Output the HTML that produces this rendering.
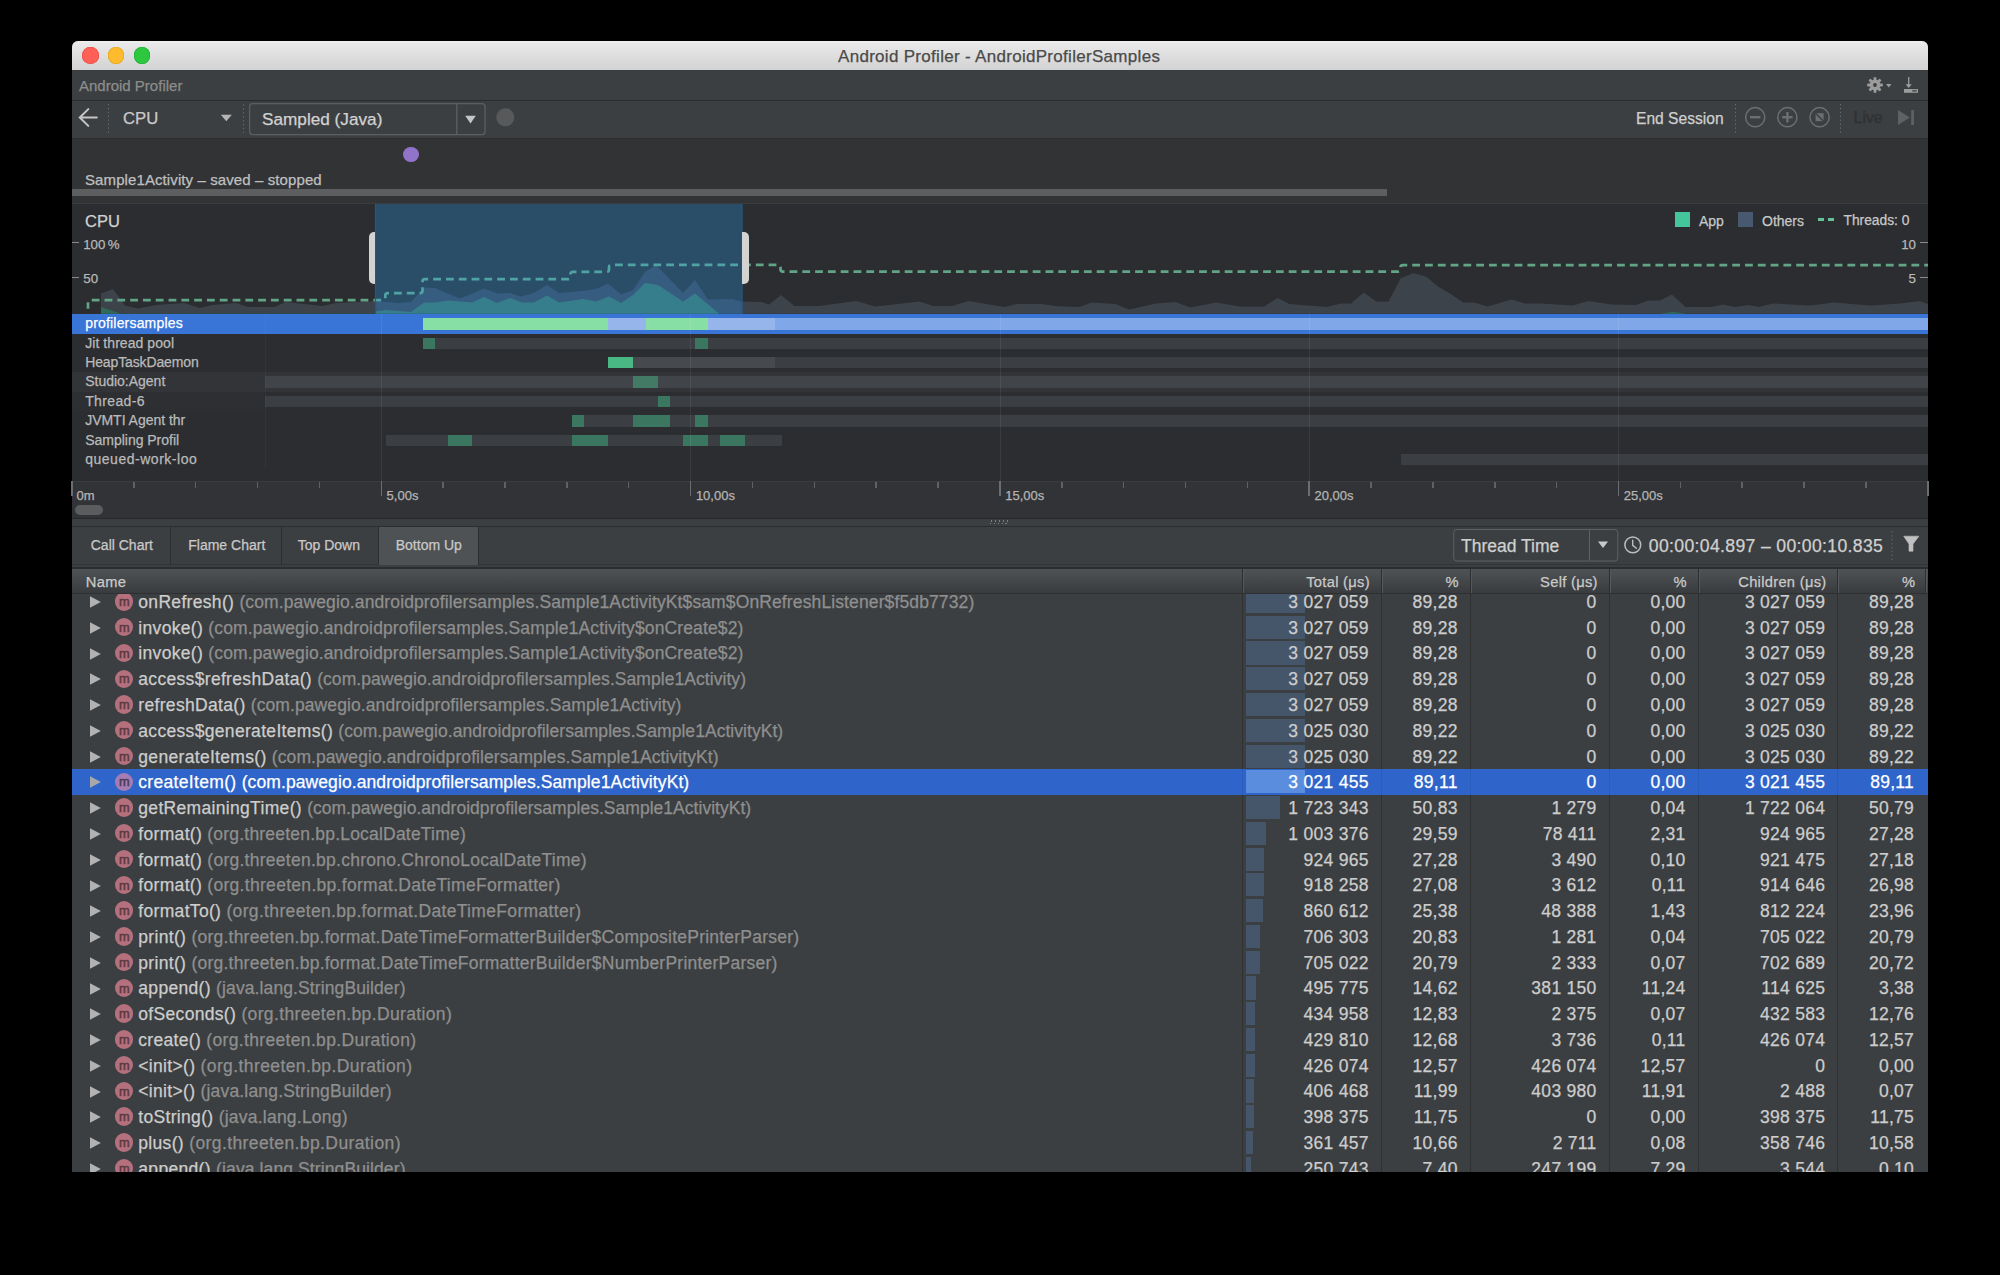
<!DOCTYPE html><html><head><meta charset="utf-8"><style>
*{margin:0;padding:0;box-sizing:border-box}
html,body{width:2000px;height:1275px;overflow:hidden;background:#000}
body{position:relative;font-family:"Liberation Sans",sans-serif}
.a{position:absolute}
.t{position:absolute;white-space:nowrap;line-height:1;-webkit-text-stroke:0.25px currentColor}
</style></head><body><div class="a" style="left:72px;top:41px;width:1856px;height:1131px;border-radius:6px 6px 0 0;overflow:hidden;background:#3c3f41">
<div class="a" style="left:0;top:0;width:100%;height:28.6px;background:linear-gradient(#f0f0f0 0px,#e8e8e8 3px,#d3d3d3 28.6px)"></div>
</div>
<div class="a" style="left:82.3px;top:47.400000000000006px;width:16.4px;height:16.4px;border-radius:50%;background:#fe5f57;box-shadow:inset 0 0 0 0.6px #e2463f"></div>
<div class="a" style="left:107.89999999999999px;top:47.400000000000006px;width:16.4px;height:16.4px;border-radius:50%;background:#febb2e;box-shadow:inset 0 0 0 0.6px #e1a116"></div>
<div class="a" style="left:133.70000000000002px;top:47.400000000000006px;width:16.4px;height:16.4px;border-radius:50%;background:#2dc840;box-shadow:inset 0 0 0 0.6px #1aab29"></div>
<div class="t" style="left:838px;top:48px;font-size:17px;color:#4a4a4a;letter-spacing:0.3px">Android Profiler - AndroidProfilerSamples</div>
<div class="a" style="left:72px;top:69.6px;width:1856px;height:30px;background:#3c3f41"></div>
<div class="t" style="left:79px;top:78px;font-size:15px;color:#8d8d8d;">Android Profiler</div>
<div class="a" style="left:72px;top:99.5px;width:1856px;height:1.5px;background:#292b2d"></div>
<div class="a" style="left:72px;top:101px;width:1856px;height:37px;background:#3c3f41"></div>
<div class="a" style="left:72px;top:137.8px;width:1856px;height:1px;background:#2a2c2e"></div>
<svg class="a" style="left:72px;top:101px" width="1856" height="37" viewBox="72 101 1856 37"><path d="M96.8,117.5 H80.2 M88.3,109.1 L79.8,117.5 L88.3,125.9" fill="none" stroke="#c6c6c6" stroke-width="2" stroke-linecap="round"/><line x1="108.5" y1="104" x2="108.5" y2="134" stroke="#6b6d6f" stroke-width="1" stroke-dasharray="1.3 2.6"/><line x1="243.6" y1="104.4" x2="243.6" y2="134" stroke="#6b6d6f" stroke-width="1" stroke-dasharray="1.3 2.6"/><line x1="1735.5" y1="104" x2="1735.5" y2="134" stroke="#6b6d6f" stroke-width="1" stroke-dasharray="1.3 2.6"/><line x1="1840.5" y1="104" x2="1840.5" y2="134" stroke="#6b6d6f" stroke-width="1" stroke-dasharray="1.3 2.6"/><path d="M220.8,114.8 H231.8 L226.3,121.2 Z" fill="#b4b4b4"/><rect x="249.6" y="103.6" width="235.4" height="31" rx="3" fill="#3c3f41" stroke="#5c5e60" stroke-width="1.3"/><line x1="456.8" y1="104" x2="456.8" y2="134" stroke="#5c5e60" stroke-width="1.3"/><path d="M465.2,115.8 H475.8 L470.5,123.4 Z" fill="#c6c6c6"/><circle cx="505.3" cy="117.3" r="9" fill="#58595b"/><circle cx="1755.2" cy="117.2" r="9.6" fill="none" stroke="#6c6e70" stroke-width="1.5"/><line x1="1750" y1="117.2" x2="1760.4" y2="117.2" stroke="#6c6e70" stroke-width="2.4"/><circle cx="1787.4" cy="117.2" r="9.6" fill="none" stroke="#6c6e70" stroke-width="1.5"/><line x1="1782.2" y1="117.2" x2="1792.6" y2="117.2" stroke="#6c6e70" stroke-width="2.4"/><line x1="1787.4" y1="112" x2="1787.4" y2="122.4" stroke="#6c6e70" stroke-width="2.4"/><circle cx="1819.6" cy="117.2" r="9.6" fill="none" stroke="#6c6e70" stroke-width="1.5"/><path d="M1815.6,113.2 H1823.6 V121.2 H1815.6 Z" fill="#6c6e70"/><path d="M1815.6,113.2 L1823.6,121.2" stroke="#3c3f41" stroke-width="1.4"/><path d="M1898,110 L1909.8,117.5 L1898,125 Z" fill="#5f6163"/><rect x="1911.2" y="110" width="2.7" height="15" fill="#5f6163"/></svg>
<div class="t" style="left:123px;top:111.1px;font-size:16.7px;color:#cacaca;">CPU</div>
<div class="t" style="left:262px;top:110.8px;font-size:17.2px;color:#d2d2d2;">Sampled (Java)</div>
<div class="t" style="left:1636px;top:111.4px;font-size:15.6px;color:#cfcfcf;">End Session</div>
<div class="t" style="left:1853.6px;top:109.9px;font-size:15.8px;color:#2e3032;">Live</div>
<svg class="a" style="left:1860px;top:74px" width="68" height="24" viewBox="1860 74 68 24"><g fill="#9c9c9c"><circle cx="1875" cy="85" r="5.4"/><rect x="1873.6" y="77.2" width="2.8" height="3.6" rx="0.6" transform="rotate(0 1875 85)"/><rect x="1873.6" y="77.2" width="2.8" height="3.6" rx="0.6" transform="rotate(45 1875 85)"/><rect x="1873.6" y="77.2" width="2.8" height="3.6" rx="0.6" transform="rotate(90 1875 85)"/><rect x="1873.6" y="77.2" width="2.8" height="3.6" rx="0.6" transform="rotate(135 1875 85)"/><rect x="1873.6" y="77.2" width="2.8" height="3.6" rx="0.6" transform="rotate(180 1875 85)"/><rect x="1873.6" y="77.2" width="2.8" height="3.6" rx="0.6" transform="rotate(225 1875 85)"/><rect x="1873.6" y="77.2" width="2.8" height="3.6" rx="0.6" transform="rotate(270 1875 85)"/><rect x="1873.6" y="77.2" width="2.8" height="3.6" rx="0.6" transform="rotate(315 1875 85)"/></g><circle cx="1875" cy="85" r="1.9" fill="#3c3f41"/><path d="M1886,84 H1891.5 L1888.75,87.6 Z" fill="#9c9c9c"/><line x1="1908.7" y1="77" x2="1908.7" y2="86" stroke="#9c9c9c" stroke-width="1.3"/><path d="M1905.6,84.2 L1908.7,88 L1911.8,84.2 Z" fill="#9c9c9c"/><rect x="1904" y="89" width="14" height="3.8" fill="#9c9c9c"/><rect x="1912.2" y="89.8" width="4.6" height="2" fill="#5a5c5e"/></svg>
<div class="a" style="left:72px;top:138.8px;width:1856px;height:64.2px;background:#313335"></div>
<div class="a" style="left:72px;top:188.5px;width:1315px;height:7.4px;background:#5c5e60"></div>
<div class="a" style="left:72px;top:202.5px;width:1856px;height:1.5px;background:#3a3c3e"></div>
<div class="a" style="left:403px;top:146.7px;width:15.6px;height:15.6px;border-radius:50%;background:#9174c9"></div>
<div class="t" style="left:85px;top:172px;font-size:15px;color:#c0c0c0;letter-spacing:0.1px">Sample1Activity – saved – stopped</div>
<div class="a" style="left:72px;top:204px;width:1856px;height:314px;background:#2b2d30"></div>
<svg class="a" style="left:72px;top:204px" width="1856" height="110" viewBox="72 204 1856 110"><defs><clipPath id="sel"><rect x="375" y="203" width="367.5" height="111"/></clipPath></defs><path d="M101,313.8 L101,293.6 L113,289 L125,305.6 L138,308.6 L156,305 L184,303 L200,308 L212,305 L236,303 L248,307 L274,307 L286,302 L322,306 L336,303 L360,302 L375,301 L398,303 L411,302 L424,287.6 L435,288 L460,298.4 L484,288.4 L498,293.6 L510,293 L521,296.4 L534,293 L547,285 L559,293 L582,291 L596,289 L608,283.6 L621,294.4 L633,290 L645,272 L656,265 L683,293 L695,280 L708,299.6 L732,299 L742,301.6 L762,302 L769,304.6 L781,295 L794.5,306 L818.5,306 L856,301 L875.5,306.4 L919,301.6 L934,306 L952,306 L968.5,301 L1004.5,307 L1016.5,304 L1042,304 L1055.5,306 L1079.5,307 L1091.5,302.5 L1115.5,304 L1129,309.4 L1156,303.4 L1175.5,302 L1190.5,307.6 L1216,302.5 L1240,306.4 L1264,306.4 L1277.5,298 L1289.5,304 L1327,307 L1340.5,303.4 L1351,303.4 L1363.6,292.6 L1376.5,301.6 L1388.5,301.6 L1400.5,278.5 L1413.4,273 L1426,276.4 L1438,286.6 L1450,293.5 L1463.5,302.5 L1474,302.5 L1487.5,306.4 L1511.5,299.5 L1525,303.4 L1540,303.4 L1573,305.5 L1588,301 L1612,304.6 L1636,305 L1648,300.4 L1660,300.4 L1672,294.4 L1685.5,307 L1711,307 L1723,304.6 L1735,307 L1748.5,305 L1759,307 L1772.5,303.4 L1810,305.5 L1834,302.5 L1870,305.5 L1900,303.4 L1919.5,301 L1928,304 L1928,313.8 Z" fill="#3c434b"/><path d="M101,313.8 L101,307 L120,313.5 L375,313.5 L375,311.6 L386,310 L411,312 L424,302.4 L435,302.4 L448,300.6 L472,302.4 L484,297 L497,303 L510,298 L522,302.4 L534,302.4 L547,295.6 L559,302.4 L583,299 L596,301.6 L609,296.4 L621,303 L633,295 L645,283 L658,285 L683,301.6 L695,293.6 L719,313.5 L719,313.8 Z M1660,313.8 L1673,311.8 L1686,313.8 Z" fill="#2f6b58"/><path d="M88.00,308.80 L88.00,302.50 Q88.00,300.10 90.40,300.10 L382.90,300.10 Q385.30,300.10 385.30,297.70 L385.30,295.50 Q385.30,293.10 387.70,293.10 L420.10,293.10 Q422.50,293.10 422.50,290.70 L422.50,281.50 Q422.50,279.10 424.90,279.10 L568.10,279.10 Q570.50,279.10 570.50,276.70 L570.50,274.20 Q570.50,271.80 572.90,271.80 L606.60,271.80 Q609.00,271.80 609.00,269.40 L609.00,267.30 Q609.00,264.90 611.40,264.90 L778.10,264.90 Q780.50,264.90 780.50,267.30 L780.50,269.20 Q780.50,271.60 782.90,271.60 L1398.10,271.60 Q1400.50,271.60 1400.50,269.20 L1400.50,267.50 Q1400.50,265.10 1402.90,265.10 L1930.00,265.10" fill="none" stroke="#62a486" stroke-width="2.7" stroke-dasharray="7.8 5.0" stroke-dashoffset="1.35" stroke-linecap="butt" stroke-linejoin="round"/><g clip-path="url(#sel)"><rect x="375" y="203" width="367.5" height="111" fill="#2a4d68"/><path d="M101,313.8 L101,293.6 L113,289 L125,305.6 L138,308.6 L156,305 L184,303 L200,308 L212,305 L236,303 L248,307 L274,307 L286,302 L322,306 L336,303 L360,302 L375,301 L398,303 L411,302 L424,287.6 L435,288 L460,298.4 L484,288.4 L498,293.6 L510,293 L521,296.4 L534,293 L547,285 L559,293 L582,291 L596,289 L608,283.6 L621,294.4 L633,290 L645,272 L656,265 L683,293 L695,280 L708,299.6 L732,299 L742,301.6 L762,302 L769,304.6 L781,295 L794.5,306 L818.5,306 L856,301 L875.5,306.4 L919,301.6 L934,306 L952,306 L968.5,301 L1004.5,307 L1016.5,304 L1042,304 L1055.5,306 L1079.5,307 L1091.5,302.5 L1115.5,304 L1129,309.4 L1156,303.4 L1175.5,302 L1190.5,307.6 L1216,302.5 L1240,306.4 L1264,306.4 L1277.5,298 L1289.5,304 L1327,307 L1340.5,303.4 L1351,303.4 L1363.6,292.6 L1376.5,301.6 L1388.5,301.6 L1400.5,278.5 L1413.4,273 L1426,276.4 L1438,286.6 L1450,293.5 L1463.5,302.5 L1474,302.5 L1487.5,306.4 L1511.5,299.5 L1525,303.4 L1540,303.4 L1573,305.5 L1588,301 L1612,304.6 L1636,305 L1648,300.4 L1660,300.4 L1672,294.4 L1685.5,307 L1711,307 L1723,304.6 L1735,307 L1748.5,305 L1759,307 L1772.5,303.4 L1810,305.5 L1834,302.5 L1870,305.5 L1900,303.4 L1919.5,301 L1928,304 L1928,313.8 Z" fill="#365d80"/><path d="M101,313.8 L101,307 L120,313.5 L375,313.5 L375,311.6 L386,310 L411,312 L424,302.4 L435,302.4 L448,300.6 L472,302.4 L484,297 L497,303 L510,298 L522,302.4 L534,302.4 L547,295.6 L559,302.4 L583,299 L596,301.6 L609,296.4 L621,303 L633,295 L645,283 L658,285 L683,301.6 L695,293.6 L719,313.5 L719,313.8 Z M1660,313.8 L1673,311.8 L1686,313.8 Z" fill="#367e8b"/><path d="M88.00,308.80 L88.00,302.50 Q88.00,300.10 90.40,300.10 L382.90,300.10 Q385.30,300.10 385.30,297.70 L385.30,295.50 Q385.30,293.10 387.70,293.10 L420.10,293.10 Q422.50,293.10 422.50,290.70 L422.50,281.50 Q422.50,279.10 424.90,279.10 L568.10,279.10 Q570.50,279.10 570.50,276.70 L570.50,274.20 Q570.50,271.80 572.90,271.80 L606.60,271.80 Q609.00,271.80 609.00,269.40 L609.00,267.30 Q609.00,264.90 611.40,264.90 L778.10,264.90 Q780.50,264.90 780.50,267.30 L780.50,269.20 Q780.50,271.60 782.90,271.60 L1398.10,271.60 Q1400.50,271.60 1400.50,269.20 L1400.50,267.50 Q1400.50,265.10 1402.90,265.10 L1930.00,265.10" fill="none" stroke="#4fa3a3" stroke-width="2.7" stroke-dasharray="7.8 5.0" stroke-dashoffset="1.35" stroke-linecap="butt" stroke-linejoin="round"/></g><rect x="375.5" y="203.5" width="366.5" height="111" fill="none" stroke="#275782" stroke-width="1.2"/></svg>
<div class="a" style="left:368.7px;top:232px;width:6.8px;height:52.2px;background:#d3d3d3;border-radius:5px 0 0 5px"></div>
<div class="a" style="left:742.4px;top:232px;width:6.8px;height:52.2px;background:#d3d3d3;border-radius:0 5px 5px 0"></div>
<div class="t" style="left:85px;top:212.5px;font-size:16.5px;color:#d2d2d2;">CPU</div>
<div class="a" style="left:72px;top:242px;width:7px;height:1px;background:#8a8a8a"></div>
<div class="a" style="left:72px;top:276.5px;width:7px;height:1px;background:#8a8a8a"></div>
<div class="t" style="left:83.3px;top:237.6px;font-size:13.3px;color:#b8b8b8;letter-spacing:-0.1px">100&#8201;%</div>
<div class="t" style="left:83.3px;top:272.1px;font-size:13.3px;color:#b8b8b8;">50</div>
<div class="a" style="left:1920px;top:242px;width:8px;height:1px;background:#8a8a8a"></div>
<div class="a" style="left:1920px;top:276.5px;width:8px;height:1px;background:#8a8a8a"></div>
<div class="t" style="right:84px;top:237.6px;font-size:13.3px;color:#b8b8b8;text-align:right;">10</div>
<div class="t" style="right:84px;top:272.1px;font-size:13.3px;color:#b8b8b8;text-align:right;">5</div>
<div class="a" style="left:1675px;top:212px;width:15px;height:15px;background:#45c69a"></div>
<div class="t" style="left:1699px;top:213.7px;font-size:14px;color:#c8c8c8;">App</div>
<div class="a" style="left:1738px;top:212px;width:15px;height:15px;background:#47586f"></div>
<div class="t" style="left:1762px;top:213.7px;font-size:14px;color:#c8c8c8;">Others</div>
<div class="a" style="left:1818px;top:217.5px;width:6px;height:3px;background:#62c496"></div>
<div class="a" style="left:1828px;top:217.5px;width:6px;height:3px;background:#62c496"></div>
<div class="t" style="left:1843.5px;top:213.7px;font-size:13.8px;color:#c8c8c8;">Threads: 0</div>
<div class="a" style="left:72px;top:372.2px;width:1856px;height:19.4px;background:#323437"></div>
<div class="a" style="left:72px;top:314px;width:1856px;height:19.6px;background:#3875d7"></div>
<div class="a" style="left:422.7px;top:318.2px;width:185.50000000000006px;height:11.4px;background:#88dfa6"></div>
<div class="a" style="left:608.2px;top:318.2px;width:37.799999999999955px;height:11.4px;background:#96b5ea"></div>
<div class="a" style="left:646px;top:318.2px;width:61.60000000000002px;height:11.4px;background:#88dfa6"></div>
<div class="a" style="left:707.6px;top:318.2px;width:67.10000000000002px;height:11.4px;background:#96b5ea"></div>
<div class="a" style="left:774.7px;top:318.2px;width:1153.3px;height:11.4px;background:#80a8e8"></div>
<div class="a" style="left:422.7px;top:337.59999999999997px;width:1505.3px;height:11.4px;background:#3b3e42"></div>
<div class="a" style="left:422.7px;top:337.59999999999997px;width:12.100000000000023px;height:11.4px;background:#3b7660"></div>
<div class="a" style="left:695px;top:337.59999999999997px;width:12.600000000000023px;height:11.4px;background:#3b7660"></div>
<div class="a" style="left:633px;top:357.0px;width:141.70000000000005px;height:11.4px;background:#46494d"></div>
<div class="a" style="left:774.7px;top:357.0px;width:1153.3px;height:11.4px;background:#3b3e42"></div>
<div class="a" style="left:608.2px;top:357.0px;width:24.799999999999955px;height:11.4px;background:#4ab884"></div>
<div class="a" style="left:265px;top:376.4px;width:1663px;height:11.4px;background:#414448"></div>
<div class="a" style="left:633.3px;top:376.4px;width:24.700000000000045px;height:11.4px;background:#427a65"></div>
<div class="a" style="left:265px;top:395.8px;width:1663px;height:11.4px;background:#3b3e42"></div>
<div class="a" style="left:658px;top:395.8px;width:12px;height:11.4px;background:#3b7660"></div>
<div class="a" style="left:571.7px;top:415.2px;width:1356.3px;height:11.4px;background:#3b3e42"></div>
<div class="a" style="left:571.7px;top:415.2px;width:12.299999999999955px;height:11.4px;background:#3b7660"></div>
<div class="a" style="left:633.3px;top:415.2px;width:36.700000000000045px;height:11.4px;background:#3b7660"></div>
<div class="a" style="left:695px;top:415.2px;width:12.600000000000023px;height:11.4px;background:#3b7660"></div>
<div class="a" style="left:385.8px;top:434.59999999999997px;width:396.2px;height:11.4px;background:#3b3e42"></div>
<div class="a" style="left:448px;top:434.59999999999997px;width:24.19999999999999px;height:11.4px;background:#3b7660"></div>
<div class="a" style="left:571.7px;top:434.59999999999997px;width:36.5px;height:11.4px;background:#3b7660"></div>
<div class="a" style="left:683px;top:434.59999999999997px;width:24.600000000000023px;height:11.4px;background:#3b7660"></div>
<div class="a" style="left:720px;top:434.59999999999997px;width:24.600000000000023px;height:11.4px;background:#3b7660"></div>
<div class="a" style="left:1401px;top:453.99999999999994px;width:527px;height:11.4px;background:#3b3e42"></div>
<div class="a" style="left:264.5px;top:314px;width:1px;height:155px;background:rgba(255,255,255,0.035)"></div>
<div class="a" style="left:380.8px;top:314px;width:1px;height:167px;background:rgba(255,255,255,0.07)"></div>
<div class="a" style="left:690.2px;top:314px;width:1px;height:167px;background:rgba(255,255,255,0.07)"></div>
<div class="a" style="left:999.5px;top:314px;width:1px;height:167px;background:rgba(255,255,255,0.07)"></div>
<div class="a" style="left:1308.7px;top:314px;width:1px;height:167px;background:rgba(255,255,255,0.07)"></div>
<div class="a" style="left:1617.9px;top:314px;width:1px;height:167px;background:rgba(255,255,255,0.07)"></div>
<div class="a" style="left:72px;top:391.6px;width:192px;height:19.4px;background:#2d2f32"></div>
<div class="t" style="left:85.2px;top:316.2px;font-size:14px;color:#ffffff;letter-spacing:0.184px">profilersamples</div>
<div class="t" style="left:85.2px;top:335.59999999999997px;font-size:14px;color:#bababa;letter-spacing:0.063px">Jit thread pool</div>
<div class="t" style="left:85.2px;top:355.0px;font-size:14px;color:#bababa;letter-spacing:-0.127px">HeapTaskDaemon</div>
<div class="t" style="left:85.2px;top:374.4px;font-size:14px;color:#bababa;letter-spacing:-0.006px">Studio:Agent</div>
<div class="t" style="left:85.2px;top:393.8px;font-size:14px;color:#bababa;letter-spacing:0.373px">Thread-6</div>
<div class="t" style="left:85.2px;top:413.2px;font-size:14px;color:#bababa;letter-spacing:-0.025px">JVMTI Agent thr</div>
<div class="t" style="left:85.2px;top:432.59999999999997px;font-size:14px;color:#bababa;letter-spacing:-0.017px">Sampling Profil</div>
<div class="t" style="left:85.2px;top:451.99999999999994px;font-size:14px;color:#bababa;letter-spacing:0.520px">queued-work-loo</div>
<div class="a" style="left:72px;top:481px;width:1856px;height:37px;background:#313336"></div>
<div class="a" style="left:72px;top:480.8px;width:1856px;height:1px;background:#3a3c3f"></div>
<div class="a" style="left:71.25px;top:481px;width:1.5px;height:14.5px;background:#6b6d70"></div>
<div class="a" style="left:133.11px;top:481.5px;width:1.5px;height:6.5px;background:#5f6164"></div>
<div class="a" style="left:194.97px;top:481.5px;width:1.5px;height:6.5px;background:#5f6164"></div>
<div class="a" style="left:256.83000000000004px;top:481.5px;width:1.5px;height:6.5px;background:#5f6164"></div>
<div class="a" style="left:318.69px;top:481.5px;width:1.5px;height:6.5px;background:#5f6164"></div>
<div class="a" style="left:380.55px;top:481px;width:1.5px;height:14.5px;background:#6b6d70"></div>
<div class="a" style="left:442.41px;top:481.5px;width:1.5px;height:6.5px;background:#5f6164"></div>
<div class="a" style="left:504.27px;top:481.5px;width:1.5px;height:6.5px;background:#5f6164"></div>
<div class="a" style="left:566.13px;top:481.5px;width:1.5px;height:6.5px;background:#5f6164"></div>
<div class="a" style="left:627.99px;top:481.5px;width:1.5px;height:6.5px;background:#5f6164"></div>
<div class="a" style="left:689.85px;top:481px;width:1.5px;height:14.5px;background:#6b6d70"></div>
<div class="a" style="left:751.71px;top:481.5px;width:1.5px;height:6.5px;background:#5f6164"></div>
<div class="a" style="left:813.57px;top:481.5px;width:1.5px;height:6.5px;background:#5f6164"></div>
<div class="a" style="left:875.4300000000001px;top:481.5px;width:1.5px;height:6.5px;background:#5f6164"></div>
<div class="a" style="left:937.29px;top:481.5px;width:1.5px;height:6.5px;background:#5f6164"></div>
<div class="a" style="left:999.15px;top:481px;width:1.5px;height:14.5px;background:#6b6d70"></div>
<div class="a" style="left:1061.01px;top:481.5px;width:1.5px;height:6.5px;background:#5f6164"></div>
<div class="a" style="left:1122.8700000000001px;top:481.5px;width:1.5px;height:6.5px;background:#5f6164"></div>
<div class="a" style="left:1184.73px;top:481.5px;width:1.5px;height:6.5px;background:#5f6164"></div>
<div class="a" style="left:1246.59px;top:481.5px;width:1.5px;height:6.5px;background:#5f6164"></div>
<div class="a" style="left:1308.45px;top:481px;width:1.5px;height:14.5px;background:#6b6d70"></div>
<div class="a" style="left:1370.31px;top:481.5px;width:1.5px;height:6.5px;background:#5f6164"></div>
<div class="a" style="left:1432.17px;top:481.5px;width:1.5px;height:6.5px;background:#5f6164"></div>
<div class="a" style="left:1494.0300000000002px;top:481.5px;width:1.5px;height:6.5px;background:#5f6164"></div>
<div class="a" style="left:1555.89px;top:481.5px;width:1.5px;height:6.5px;background:#5f6164"></div>
<div class="a" style="left:1617.75px;top:481px;width:1.5px;height:14.5px;background:#6b6d70"></div>
<div class="a" style="left:1679.6100000000001px;top:481.5px;width:1.5px;height:6.5px;background:#5f6164"></div>
<div class="a" style="left:1741.47px;top:481.5px;width:1.5px;height:6.5px;background:#5f6164"></div>
<div class="a" style="left:1803.33px;top:481.5px;width:1.5px;height:6.5px;background:#5f6164"></div>
<div class="a" style="left:1865.19px;top:481.5px;width:1.5px;height:6.5px;background:#5f6164"></div>
<div class="a" style="left:1927.05px;top:481px;width:1.5px;height:14.5px;background:#6b6d70"></div>
<div class="t" style="left:76.5px;top:489px;font-size:13px;color:#b5b5b5;">0m</div>
<div class="t" style="left:386.6px;top:489px;font-size:13px;color:#b5b5b5;">5,00s</div>
<div class="t" style="left:695.9px;top:489px;font-size:13px;color:#b5b5b5;">10,00s</div>
<div class="t" style="left:1005.2px;top:489px;font-size:13px;color:#b5b5b5;">15,00s</div>
<div class="t" style="left:1314.5px;top:489px;font-size:13px;color:#b5b5b5;">20,00s</div>
<div class="t" style="left:1623.8px;top:489px;font-size:13px;color:#b5b5b5;">25,00s</div>
<div class="a" style="left:75px;top:505px;width:28px;height:10px;background:#5a5c5e;border-radius:5px"></div>
<div class="a" style="left:72px;top:517.5px;width:1856px;height:1px;background:#262829"></div>
<div class="a" style="left:72px;top:518.5px;width:1856px;height:8px;background:#3c3f41"></div>
<div class="a" style="left:72px;top:526px;width:1856px;height:1px;background:#2b2d2f"></div>
<div class="a" style="left:991.2px;top:520.4px;width:1.3px;height:1.3px;background:#7c7e80"></div>
<div class="a" style="left:989.8px;top:523.2px;width:1.3px;height:1.3px;background:#7c7e80"></div>
<div class="a" style="left:995.1px;top:520.4px;width:1.3px;height:1.3px;background:#7c7e80"></div>
<div class="a" style="left:993.6999999999999px;top:523.2px;width:1.3px;height:1.3px;background:#7c7e80"></div>
<div class="a" style="left:999.0px;top:520.4px;width:1.3px;height:1.3px;background:#7c7e80"></div>
<div class="a" style="left:997.5999999999999px;top:523.2px;width:1.3px;height:1.3px;background:#7c7e80"></div>
<div class="a" style="left:1002.9000000000001px;top:520.4px;width:1.3px;height:1.3px;background:#7c7e80"></div>
<div class="a" style="left:1001.5px;top:523.2px;width:1.3px;height:1.3px;background:#7c7e80"></div>
<div class="a" style="left:1006.8000000000001px;top:520.4px;width:1.3px;height:1.3px;background:#7c7e80"></div>
<div class="a" style="left:1005.4px;top:523.2px;width:1.3px;height:1.3px;background:#7c7e80"></div>
<div class="a" style="left:72px;top:527px;width:1856px;height:38px;background:#3c3f41"></div>
<div class="a" style="left:72px;top:564.3px;width:1856px;height:1.2px;background:#323436"></div>
<div class="a" style="left:378px;top:527px;width:100px;height:37.5px;background:#4e5255"></div>
<div class="a" style="left:169.5px;top:527px;width:1.2px;height:37.5px;background:#2b2d2f"></div>
<div class="a" style="left:280.5px;top:527px;width:1.2px;height:37.5px;background:#2b2d2f"></div>
<div class="a" style="left:377.5px;top:527px;width:1.2px;height:37.5px;background:#2b2d2f"></div>
<div class="a" style="left:477.5px;top:527px;width:1.2px;height:37.5px;background:#2b2d2f"></div>
<div class="t" style="left:90.75px;top:538px;font-size:14px;color:#c9c9c9;">Call Chart</div>
<div class="t" style="left:188.25px;top:538px;font-size:14px;color:#c9c9c9;">Flame Chart</div>
<div class="t" style="left:297.75px;top:538px;font-size:14px;color:#c9c9c9;">Top Down</div>
<div class="t" style="left:395.75px;top:538px;font-size:14px;color:#c9c9c9;">Bottom Up</div>
<svg class="a" style="left:1440px;top:527px" width="488" height="38" viewBox="1440 527 488 38"><rect x="1453.75" y="529.5" width="164" height="31.5" rx="3" fill="#3c3f41" stroke="#5e6163" stroke-width="1"/><line x1="1589.5" y1="530" x2="1589.5" y2="560.5" stroke="#5e6163" stroke-width="1"/><path d="M1598,541.5 H1608 L1603,548 Z" fill="#c9c9c9"/><circle cx="1632.8" cy="544.9" r="7.9" fill="none" stroke="#bdbdbd" stroke-width="1.5"/><path d="M1632.7,540.3 V545.3 L1636.4,548.2" fill="none" stroke="#bdbdbd" stroke-width="1.4" stroke-linecap="round"/><line x1="1891.9" y1="531.4" x2="1891.9" y2="560" stroke="#6b6d6f" stroke-width="1" stroke-dasharray="1.3 2.6"/><path d="M1903.7,536.2 H1918.9 L1913,544 V551.2 H1909 V544 Z" fill="#c0c0c0" stroke="#c0c0c0" stroke-width="0.6" stroke-linejoin="round"/></svg>
<div class="t" style="left:1461px;top:537.8px;font-size:17.5px;color:#d0d0d0;">Thread Time</div>
<div class="t" style="left:1648.75px;top:537.8px;font-size:17.6px;color:#d0d0d0;letter-spacing:0.35px">00:00:04.897 – 00:00:10.835</div>
<div class="a" style="left:72px;top:565.5px;width:1856px;height:606.5px;background:#3c3f41"></div>
<div class="a" style="left:72px;top:769px;width:1856px;height:25.8px;background:#2f65ca"></div>
<div class="a" style="left:1241.7px;top:593px;width:1.2px;height:579px;background:#2e3032"></div>
<div class="a" style="left:1241.7px;top:769px;width:1.2px;height:25.8px;background:#2b5dbf"></div>
<div class="a" style="left:1380.9px;top:593px;width:1.2px;height:579px;background:#2e3032"></div>
<div class="a" style="left:1380.9px;top:769px;width:1.2px;height:25.8px;background:#2b5dbf"></div>
<div class="a" style="left:1469.9px;top:593px;width:1.2px;height:579px;background:#2e3032"></div>
<div class="a" style="left:1469.9px;top:769px;width:1.2px;height:25.8px;background:#2b5dbf"></div>
<div class="a" style="left:1608.9px;top:593px;width:1.2px;height:579px;background:#2e3032"></div>
<div class="a" style="left:1608.9px;top:769px;width:1.2px;height:25.8px;background:#2b5dbf"></div>
<div class="a" style="left:1698.1000000000001px;top:593px;width:1.2px;height:579px;background:#2e3032"></div>
<div class="a" style="left:1698.1000000000001px;top:769px;width:1.2px;height:25.8px;background:#2b5dbf"></div>
<div class="a" style="left:1837.2px;top:593px;width:1.2px;height:579px;background:#2e3032"></div>
<div class="a" style="left:1837.2px;top:769px;width:1.2px;height:25.8px;background:#2b5dbf"></div>
<div class="a" style="left:72px;top:593px;width:1856px;height:579px;overflow:hidden">
<div class="a" style="left:1174.2px;top:-3.06px;width:59.28px;height:23.2px;background:#45566a"></div>
<svg class="a" style="left:17.799999999999997px;top:3.14px" width="11" height="12" viewBox="0 0 11 12"><path d="M0,0.2 L10.8,5.9 L0,11.8 Z" fill="#b2b2b2"/></svg>
<div class="a" style="left:42.7px;top:-0.76px;width:18.4px;height:18.4px;border-radius:50%;background:#b4707d"></div>
<div class="t" style="left:46.900000000000006px;top:3.14px;font-size:12.8px;-webkit-text-stroke:0.5px currentColor;color:#5a3a42">m</div>
<div class="t" style="left:66.30000000000001px;top:0.94px;font-size:17.5px;color:#cdcdcd;letter-spacing:0.32px">onRefresh()</div>
<div class="t" style="left:167.42px;top:0.94px;font-size:17.5px;color:#8f8f8f;letter-spacing:0.121px">(com.pawegio.androidprofilersamples.Sample1ActivityKt$sam$OnRefreshListener$f5db7732)</div>
<div class="t" style="right:559.60px;top:0.94px;font-size:17.5px;color:#cdcdcd;letter-spacing:0.28px;margin-right:-0.28px">3 027 059</div>
<div class="t" style="right:470.60px;top:0.94px;font-size:17.5px;color:#cdcdcd;letter-spacing:0.28px;margin-right:-0.28px">89,28</div>
<div class="t" style="right:331.70px;top:0.94px;font-size:17.5px;color:#cdcdcd;letter-spacing:0.28px;margin-right:-0.28px">0</div>
<div class="t" style="right:242.70px;top:0.94px;font-size:17.5px;color:#cdcdcd;letter-spacing:0.28px;margin-right:-0.28px">0,00</div>
<div class="t" style="right:103.00px;top:0.94px;font-size:17.5px;color:#cdcdcd;letter-spacing:0.28px;margin-right:-0.28px">3 027 059</div>
<div class="t" style="right:14.20px;top:0.94px;font-size:17.5px;color:#cdcdcd;letter-spacing:0.28px;margin-right:-0.28px">89,28</div>
<div class="a" style="left:1174.2px;top:22.70px;width:59.28px;height:23.2px;background:#45566a"></div>
<svg class="a" style="left:17.799999999999997px;top:28.90px" width="11" height="12" viewBox="0 0 11 12"><path d="M0,0.2 L10.8,5.9 L0,11.8 Z" fill="#b2b2b2"/></svg>
<div class="a" style="left:42.7px;top:25.00px;width:18.4px;height:18.4px;border-radius:50%;background:#b4707d"></div>
<div class="t" style="left:46.900000000000006px;top:28.90px;font-size:12.8px;-webkit-text-stroke:0.5px currentColor;color:#5a3a42">m</div>
<div class="t" style="left:66.30000000000001px;top:26.70px;font-size:17.5px;color:#cdcdcd;letter-spacing:0.32px">invoke()</div>
<div class="t" style="left:136.31px;top:26.70px;font-size:17.5px;color:#8f8f8f;letter-spacing:0.126px">(com.pawegio.androidprofilersamples.Sample1Activity$onCreate$2)</div>
<div class="t" style="right:559.60px;top:26.70px;font-size:17.5px;color:#cdcdcd;letter-spacing:0.28px;margin-right:-0.28px">3 027 059</div>
<div class="t" style="right:470.60px;top:26.70px;font-size:17.5px;color:#cdcdcd;letter-spacing:0.28px;margin-right:-0.28px">89,28</div>
<div class="t" style="right:331.70px;top:26.70px;font-size:17.5px;color:#cdcdcd;letter-spacing:0.28px;margin-right:-0.28px">0</div>
<div class="t" style="right:242.70px;top:26.70px;font-size:17.5px;color:#cdcdcd;letter-spacing:0.28px;margin-right:-0.28px">0,00</div>
<div class="t" style="right:103.00px;top:26.70px;font-size:17.5px;color:#cdcdcd;letter-spacing:0.28px;margin-right:-0.28px">3 027 059</div>
<div class="t" style="right:14.20px;top:26.70px;font-size:17.5px;color:#cdcdcd;letter-spacing:0.28px;margin-right:-0.28px">89,28</div>
<div class="a" style="left:1174.2px;top:48.46px;width:59.28px;height:23.2px;background:#45566a"></div>
<svg class="a" style="left:17.799999999999997px;top:54.66px" width="11" height="12" viewBox="0 0 11 12"><path d="M0,0.2 L10.8,5.9 L0,11.8 Z" fill="#b2b2b2"/></svg>
<div class="a" style="left:42.7px;top:50.76px;width:18.4px;height:18.4px;border-radius:50%;background:#b4707d"></div>
<div class="t" style="left:46.900000000000006px;top:54.66px;font-size:12.8px;-webkit-text-stroke:0.5px currentColor;color:#5a3a42">m</div>
<div class="t" style="left:66.30000000000001px;top:52.46px;font-size:17.5px;color:#cdcdcd;letter-spacing:0.32px">invoke()</div>
<div class="t" style="left:136.31px;top:52.46px;font-size:17.5px;color:#8f8f8f;letter-spacing:0.126px">(com.pawegio.androidprofilersamples.Sample1Activity$onCreate$2)</div>
<div class="t" style="right:559.60px;top:52.46px;font-size:17.5px;color:#cdcdcd;letter-spacing:0.28px;margin-right:-0.28px">3 027 059</div>
<div class="t" style="right:470.60px;top:52.46px;font-size:17.5px;color:#cdcdcd;letter-spacing:0.28px;margin-right:-0.28px">89,28</div>
<div class="t" style="right:331.70px;top:52.46px;font-size:17.5px;color:#cdcdcd;letter-spacing:0.28px;margin-right:-0.28px">0</div>
<div class="t" style="right:242.70px;top:52.46px;font-size:17.5px;color:#cdcdcd;letter-spacing:0.28px;margin-right:-0.28px">0,00</div>
<div class="t" style="right:103.00px;top:52.46px;font-size:17.5px;color:#cdcdcd;letter-spacing:0.28px;margin-right:-0.28px">3 027 059</div>
<div class="t" style="right:14.20px;top:52.46px;font-size:17.5px;color:#cdcdcd;letter-spacing:0.28px;margin-right:-0.28px">89,28</div>
<div class="a" style="left:1174.2px;top:74.22px;width:59.28px;height:23.2px;background:#45566a"></div>
<svg class="a" style="left:17.799999999999997px;top:80.42px" width="11" height="12" viewBox="0 0 11 12"><path d="M0,0.2 L10.8,5.9 L0,11.8 Z" fill="#b2b2b2"/></svg>
<div class="a" style="left:42.7px;top:76.52px;width:18.4px;height:18.4px;border-radius:50%;background:#b4707d"></div>
<div class="t" style="left:46.900000000000006px;top:80.42px;font-size:12.8px;-webkit-text-stroke:0.5px currentColor;color:#5a3a42">m</div>
<div class="t" style="left:66.30000000000001px;top:78.22px;font-size:17.5px;color:#cdcdcd;letter-spacing:0.32px">access$refreshData()</div>
<div class="t" style="left:245.19px;top:78.22px;font-size:17.5px;color:#8f8f8f;letter-spacing:0.054px">(com.pawegio.androidprofilersamples.Sample1Activity)</div>
<div class="t" style="right:559.60px;top:78.22px;font-size:17.5px;color:#cdcdcd;letter-spacing:0.28px;margin-right:-0.28px">3 027 059</div>
<div class="t" style="right:470.60px;top:78.22px;font-size:17.5px;color:#cdcdcd;letter-spacing:0.28px;margin-right:-0.28px">89,28</div>
<div class="t" style="right:331.70px;top:78.22px;font-size:17.5px;color:#cdcdcd;letter-spacing:0.28px;margin-right:-0.28px">0</div>
<div class="t" style="right:242.70px;top:78.22px;font-size:17.5px;color:#cdcdcd;letter-spacing:0.28px;margin-right:-0.28px">0,00</div>
<div class="t" style="right:103.00px;top:78.22px;font-size:17.5px;color:#cdcdcd;letter-spacing:0.28px;margin-right:-0.28px">3 027 059</div>
<div class="t" style="right:14.20px;top:78.22px;font-size:17.5px;color:#cdcdcd;letter-spacing:0.28px;margin-right:-0.28px">89,28</div>
<div class="a" style="left:1174.2px;top:99.98px;width:59.28px;height:23.2px;background:#45566a"></div>
<svg class="a" style="left:17.799999999999997px;top:106.18px" width="11" height="12" viewBox="0 0 11 12"><path d="M0,0.2 L10.8,5.9 L0,11.8 Z" fill="#b2b2b2"/></svg>
<div class="a" style="left:42.7px;top:102.28px;width:18.4px;height:18.4px;border-radius:50%;background:#b4707d"></div>
<div class="t" style="left:46.900000000000006px;top:106.18px;font-size:12.8px;-webkit-text-stroke:0.5px currentColor;color:#5a3a42">m</div>
<div class="t" style="left:66.30000000000001px;top:103.98px;font-size:17.5px;color:#cdcdcd;letter-spacing:0.32px">refreshData()</div>
<div class="t" style="left:178.75px;top:103.98px;font-size:17.5px;color:#8f8f8f;letter-spacing:0.091px">(com.pawegio.androidprofilersamples.Sample1Activity)</div>
<div class="t" style="right:559.60px;top:103.98px;font-size:17.5px;color:#cdcdcd;letter-spacing:0.28px;margin-right:-0.28px">3 027 059</div>
<div class="t" style="right:470.60px;top:103.98px;font-size:17.5px;color:#cdcdcd;letter-spacing:0.28px;margin-right:-0.28px">89,28</div>
<div class="t" style="right:331.70px;top:103.98px;font-size:17.5px;color:#cdcdcd;letter-spacing:0.28px;margin-right:-0.28px">0</div>
<div class="t" style="right:242.70px;top:103.98px;font-size:17.5px;color:#cdcdcd;letter-spacing:0.28px;margin-right:-0.28px">0,00</div>
<div class="t" style="right:103.00px;top:103.98px;font-size:17.5px;color:#cdcdcd;letter-spacing:0.28px;margin-right:-0.28px">3 027 059</div>
<div class="t" style="right:14.20px;top:103.98px;font-size:17.5px;color:#cdcdcd;letter-spacing:0.28px;margin-right:-0.28px">89,28</div>
<div class="a" style="left:1174.2px;top:125.74px;width:59.24px;height:23.2px;background:#45566a"></div>
<svg class="a" style="left:17.799999999999997px;top:131.94px" width="11" height="12" viewBox="0 0 11 12"><path d="M0,0.2 L10.8,5.9 L0,11.8 Z" fill="#b2b2b2"/></svg>
<div class="a" style="left:42.7px;top:128.04px;width:18.4px;height:18.4px;border-radius:50%;background:#b4707d"></div>
<div class="t" style="left:46.900000000000006px;top:131.94px;font-size:12.8px;-webkit-text-stroke:0.5px currentColor;color:#5a3a42">m</div>
<div class="t" style="left:66.30000000000001px;top:129.74px;font-size:17.5px;color:#cdcdcd;letter-spacing:0.32px">access$generateItems()</div>
<div class="t" style="left:266.27px;top:129.74px;font-size:17.5px;color:#8f8f8f;letter-spacing:0.044px">(com.pawegio.androidprofilersamples.Sample1ActivityKt)</div>
<div class="t" style="right:559.60px;top:129.74px;font-size:17.5px;color:#cdcdcd;letter-spacing:0.28px;margin-right:-0.28px">3 025 030</div>
<div class="t" style="right:470.60px;top:129.74px;font-size:17.5px;color:#cdcdcd;letter-spacing:0.28px;margin-right:-0.28px">89,22</div>
<div class="t" style="right:331.70px;top:129.74px;font-size:17.5px;color:#cdcdcd;letter-spacing:0.28px;margin-right:-0.28px">0</div>
<div class="t" style="right:242.70px;top:129.74px;font-size:17.5px;color:#cdcdcd;letter-spacing:0.28px;margin-right:-0.28px">0,00</div>
<div class="t" style="right:103.00px;top:129.74px;font-size:17.5px;color:#cdcdcd;letter-spacing:0.28px;margin-right:-0.28px">3 025 030</div>
<div class="t" style="right:14.20px;top:129.74px;font-size:17.5px;color:#cdcdcd;letter-spacing:0.28px;margin-right:-0.28px">89,22</div>
<div class="a" style="left:1174.2px;top:151.50px;width:59.24px;height:23.2px;background:#45566a"></div>
<svg class="a" style="left:17.799999999999997px;top:157.70px" width="11" height="12" viewBox="0 0 11 12"><path d="M0,0.2 L10.8,5.9 L0,11.8 Z" fill="#b2b2b2"/></svg>
<div class="a" style="left:42.7px;top:153.80px;width:18.4px;height:18.4px;border-radius:50%;background:#b4707d"></div>
<div class="t" style="left:46.900000000000006px;top:157.70px;font-size:12.8px;-webkit-text-stroke:0.5px currentColor;color:#5a3a42">m</div>
<div class="t" style="left:66.30000000000001px;top:155.50px;font-size:17.5px;color:#cdcdcd;letter-spacing:0.32px">generateItems()</div>
<div class="t" style="left:199.83px;top:155.50px;font-size:17.5px;color:#8f8f8f;letter-spacing:0.080px">(com.pawegio.androidprofilersamples.Sample1ActivityKt)</div>
<div class="t" style="right:559.60px;top:155.50px;font-size:17.5px;color:#cdcdcd;letter-spacing:0.28px;margin-right:-0.28px">3 025 030</div>
<div class="t" style="right:470.60px;top:155.50px;font-size:17.5px;color:#cdcdcd;letter-spacing:0.28px;margin-right:-0.28px">89,22</div>
<div class="t" style="right:331.70px;top:155.50px;font-size:17.5px;color:#cdcdcd;letter-spacing:0.28px;margin-right:-0.28px">0</div>
<div class="t" style="right:242.70px;top:155.50px;font-size:17.5px;color:#cdcdcd;letter-spacing:0.28px;margin-right:-0.28px">0,00</div>
<div class="t" style="right:103.00px;top:155.50px;font-size:17.5px;color:#cdcdcd;letter-spacing:0.28px;margin-right:-0.28px">3 025 030</div>
<div class="t" style="right:14.20px;top:155.50px;font-size:17.5px;color:#cdcdcd;letter-spacing:0.28px;margin-right:-0.28px">89,22</div>
<div class="a" style="left:1174.2px;top:177.26px;width:59.17px;height:23.2px;background:#5b8ddf"></div>
<svg class="a" style="left:17.799999999999997px;top:183.46px" width="11" height="12" viewBox="0 0 11 12"><path d="M0,0.2 L10.8,5.9 L0,11.8 Z" fill="#a9a9a9"/></svg>
<div class="a" style="left:42.7px;top:179.56px;width:18.4px;height:18.4px;border-radius:50%;background:#a57db4"></div>
<div class="t" style="left:46.900000000000006px;top:183.46px;font-size:12.8px;-webkit-text-stroke:0.5px currentColor;color:#4a3a55">m</div>
<div class="t" style="left:66.30000000000001px;top:181.26px;font-size:17.5px;color:#ffffff;letter-spacing:0.32px">createItem()</div>
<div class="t" style="left:169.67px;top:181.26px;font-size:17.5px;color:#ffffff;letter-spacing:0.094px">(com.pawegio.androidprofilersamples.Sample1ActivityKt)</div>
<div class="t" style="right:559.60px;top:181.26px;font-size:17.5px;color:#ffffff;letter-spacing:0.28px;margin-right:-0.28px">3 021 455</div>
<div class="t" style="right:470.60px;top:181.26px;font-size:17.5px;color:#ffffff;letter-spacing:0.28px;margin-right:-0.28px">89,11</div>
<div class="t" style="right:331.70px;top:181.26px;font-size:17.5px;color:#ffffff;letter-spacing:0.28px;margin-right:-0.28px">0</div>
<div class="t" style="right:242.70px;top:181.26px;font-size:17.5px;color:#ffffff;letter-spacing:0.28px;margin-right:-0.28px">0,00</div>
<div class="t" style="right:103.00px;top:181.26px;font-size:17.5px;color:#ffffff;letter-spacing:0.28px;margin-right:-0.28px">3 021 455</div>
<div class="t" style="right:14.20px;top:181.26px;font-size:17.5px;color:#ffffff;letter-spacing:0.28px;margin-right:-0.28px">89,11</div>
<div class="a" style="left:1174.2px;top:203.02px;width:33.75px;height:23.2px;background:#45566a"></div>
<svg class="a" style="left:17.799999999999997px;top:209.22px" width="11" height="12" viewBox="0 0 11 12"><path d="M0,0.2 L10.8,5.9 L0,11.8 Z" fill="#b2b2b2"/></svg>
<div class="a" style="left:42.7px;top:205.32px;width:18.4px;height:18.4px;border-radius:50%;background:#b4707d"></div>
<div class="t" style="left:46.900000000000006px;top:209.22px;font-size:12.8px;-webkit-text-stroke:0.5px currentColor;color:#5a3a42">m</div>
<div class="t" style="left:66.30000000000001px;top:207.02px;font-size:17.5px;color:#cdcdcd;letter-spacing:0.32px">getRemainingTime()</div>
<div class="t" style="left:235.14px;top:207.02px;font-size:17.5px;color:#8f8f8f;letter-spacing:0.028px">(com.pawegio.androidprofilersamples.Sample1ActivityKt)</div>
<div class="t" style="right:559.60px;top:207.02px;font-size:17.5px;color:#cdcdcd;letter-spacing:0.28px;margin-right:-0.28px">1 723 343</div>
<div class="t" style="right:470.60px;top:207.02px;font-size:17.5px;color:#cdcdcd;letter-spacing:0.28px;margin-right:-0.28px">50,83</div>
<div class="t" style="right:331.70px;top:207.02px;font-size:17.5px;color:#cdcdcd;letter-spacing:0.28px;margin-right:-0.28px">1 279</div>
<div class="t" style="right:242.70px;top:207.02px;font-size:17.5px;color:#cdcdcd;letter-spacing:0.28px;margin-right:-0.28px">0,04</div>
<div class="t" style="right:103.00px;top:207.02px;font-size:17.5px;color:#cdcdcd;letter-spacing:0.28px;margin-right:-0.28px">1 722 064</div>
<div class="t" style="right:14.20px;top:207.02px;font-size:17.5px;color:#cdcdcd;letter-spacing:0.28px;margin-right:-0.28px">50,79</div>
<div class="a" style="left:1174.2px;top:228.78px;width:19.65px;height:23.2px;background:#45566a"></div>
<svg class="a" style="left:17.799999999999997px;top:234.98px" width="11" height="12" viewBox="0 0 11 12"><path d="M0,0.2 L10.8,5.9 L0,11.8 Z" fill="#b2b2b2"/></svg>
<div class="a" style="left:42.7px;top:231.08px;width:18.4px;height:18.4px;border-radius:50%;background:#b4707d"></div>
<div class="t" style="left:46.900000000000006px;top:234.98px;font-size:12.8px;-webkit-text-stroke:0.5px currentColor;color:#5a3a42">m</div>
<div class="t" style="left:66.30000000000001px;top:232.78px;font-size:17.5px;color:#cdcdcd;letter-spacing:0.32px">format()</div>
<div class="t" style="left:135.31px;top:232.78px;font-size:17.5px;color:#8f8f8f;letter-spacing:0.207px">(org.threeten.bp.LocalDateTime)</div>
<div class="t" style="right:559.60px;top:232.78px;font-size:17.5px;color:#cdcdcd;letter-spacing:0.28px;margin-right:-0.28px">1 003 376</div>
<div class="t" style="right:470.60px;top:232.78px;font-size:17.5px;color:#cdcdcd;letter-spacing:0.28px;margin-right:-0.28px">29,59</div>
<div class="t" style="right:331.70px;top:232.78px;font-size:17.5px;color:#cdcdcd;letter-spacing:0.28px;margin-right:-0.28px">78 411</div>
<div class="t" style="right:242.70px;top:232.78px;font-size:17.5px;color:#cdcdcd;letter-spacing:0.28px;margin-right:-0.28px">2,31</div>
<div class="t" style="right:103.00px;top:232.78px;font-size:17.5px;color:#cdcdcd;letter-spacing:0.28px;margin-right:-0.28px">924 965</div>
<div class="t" style="right:14.20px;top:232.78px;font-size:17.5px;color:#cdcdcd;letter-spacing:0.28px;margin-right:-0.28px">27,28</div>
<div class="a" style="left:1174.2px;top:254.54px;width:18.11px;height:23.2px;background:#45566a"></div>
<svg class="a" style="left:17.799999999999997px;top:260.74px" width="11" height="12" viewBox="0 0 11 12"><path d="M0,0.2 L10.8,5.9 L0,11.8 Z" fill="#b2b2b2"/></svg>
<div class="a" style="left:42.7px;top:256.84px;width:18.4px;height:18.4px;border-radius:50%;background:#b4707d"></div>
<div class="t" style="left:46.900000000000006px;top:260.74px;font-size:12.8px;-webkit-text-stroke:0.5px currentColor;color:#5a3a42">m</div>
<div class="t" style="left:66.30000000000001px;top:258.54px;font-size:17.5px;color:#cdcdcd;letter-spacing:0.32px">format()</div>
<div class="t" style="left:135.31px;top:258.54px;font-size:17.5px;color:#8f8f8f;letter-spacing:0.263px">(org.threeten.bp.chrono.ChronoLocalDateTime)</div>
<div class="t" style="right:559.60px;top:258.54px;font-size:17.5px;color:#cdcdcd;letter-spacing:0.28px;margin-right:-0.28px">924 965</div>
<div class="t" style="right:470.60px;top:258.54px;font-size:17.5px;color:#cdcdcd;letter-spacing:0.28px;margin-right:-0.28px">27,28</div>
<div class="t" style="right:331.70px;top:258.54px;font-size:17.5px;color:#cdcdcd;letter-spacing:0.28px;margin-right:-0.28px">3 490</div>
<div class="t" style="right:242.70px;top:258.54px;font-size:17.5px;color:#cdcdcd;letter-spacing:0.28px;margin-right:-0.28px">0,10</div>
<div class="t" style="right:103.00px;top:258.54px;font-size:17.5px;color:#cdcdcd;letter-spacing:0.28px;margin-right:-0.28px">921 475</div>
<div class="t" style="right:14.20px;top:258.54px;font-size:17.5px;color:#cdcdcd;letter-spacing:0.28px;margin-right:-0.28px">27,18</div>
<div class="a" style="left:1174.2px;top:280.30px;width:17.98px;height:23.2px;background:#45566a"></div>
<svg class="a" style="left:17.799999999999997px;top:286.50px" width="11" height="12" viewBox="0 0 11 12"><path d="M0,0.2 L10.8,5.9 L0,11.8 Z" fill="#b2b2b2"/></svg>
<div class="a" style="left:42.7px;top:282.60px;width:18.4px;height:18.4px;border-radius:50%;background:#b4707d"></div>
<div class="t" style="left:46.900000000000006px;top:286.50px;font-size:12.8px;-webkit-text-stroke:0.5px currentColor;color:#5a3a42">m</div>
<div class="t" style="left:66.30000000000001px;top:284.30px;font-size:17.5px;color:#cdcdcd;letter-spacing:0.32px">format()</div>
<div class="t" style="left:135.31px;top:284.30px;font-size:17.5px;color:#8f8f8f;letter-spacing:0.299px">(org.threeten.bp.format.DateTimeFormatter)</div>
<div class="t" style="right:559.60px;top:284.30px;font-size:17.5px;color:#cdcdcd;letter-spacing:0.28px;margin-right:-0.28px">918 258</div>
<div class="t" style="right:470.60px;top:284.30px;font-size:17.5px;color:#cdcdcd;letter-spacing:0.28px;margin-right:-0.28px">27,08</div>
<div class="t" style="right:331.70px;top:284.30px;font-size:17.5px;color:#cdcdcd;letter-spacing:0.28px;margin-right:-0.28px">3 612</div>
<div class="t" style="right:242.70px;top:284.30px;font-size:17.5px;color:#cdcdcd;letter-spacing:0.28px;margin-right:-0.28px">0,11</div>
<div class="t" style="right:103.00px;top:284.30px;font-size:17.5px;color:#cdcdcd;letter-spacing:0.28px;margin-right:-0.28px">914 646</div>
<div class="t" style="right:14.20px;top:284.30px;font-size:17.5px;color:#cdcdcd;letter-spacing:0.28px;margin-right:-0.28px">26,98</div>
<div class="a" style="left:1174.2px;top:306.06px;width:16.85px;height:23.2px;background:#45566a"></div>
<svg class="a" style="left:17.799999999999997px;top:312.26px" width="11" height="12" viewBox="0 0 11 12"><path d="M0,0.2 L10.8,5.9 L0,11.8 Z" fill="#b2b2b2"/></svg>
<div class="a" style="left:42.7px;top:308.36px;width:18.4px;height:18.4px;border-radius:50%;background:#b4707d"></div>
<div class="t" style="left:46.900000000000006px;top:312.26px;font-size:12.8px;-webkit-text-stroke:0.5px currentColor;color:#5a3a42">m</div>
<div class="t" style="left:66.30000000000001px;top:310.06px;font-size:17.5px;color:#cdcdcd;letter-spacing:0.32px">formatTo()</div>
<div class="t" style="left:154.44px;top:310.06px;font-size:17.5px;color:#8f8f8f;letter-spacing:0.339px">(org.threeten.bp.format.DateTimeFormatter)</div>
<div class="t" style="right:559.60px;top:310.06px;font-size:17.5px;color:#cdcdcd;letter-spacing:0.28px;margin-right:-0.28px">860 612</div>
<div class="t" style="right:470.60px;top:310.06px;font-size:17.5px;color:#cdcdcd;letter-spacing:0.28px;margin-right:-0.28px">25,38</div>
<div class="t" style="right:331.70px;top:310.06px;font-size:17.5px;color:#cdcdcd;letter-spacing:0.28px;margin-right:-0.28px">48 388</div>
<div class="t" style="right:242.70px;top:310.06px;font-size:17.5px;color:#cdcdcd;letter-spacing:0.28px;margin-right:-0.28px">1,43</div>
<div class="t" style="right:103.00px;top:310.06px;font-size:17.5px;color:#cdcdcd;letter-spacing:0.28px;margin-right:-0.28px">812 224</div>
<div class="t" style="right:14.20px;top:310.06px;font-size:17.5px;color:#cdcdcd;letter-spacing:0.28px;margin-right:-0.28px">23,96</div>
<div class="a" style="left:1174.2px;top:331.82px;width:13.83px;height:23.2px;background:#45566a"></div>
<svg class="a" style="left:17.799999999999997px;top:338.02px" width="11" height="12" viewBox="0 0 11 12"><path d="M0,0.2 L10.8,5.9 L0,11.8 Z" fill="#b2b2b2"/></svg>
<div class="a" style="left:42.7px;top:334.12px;width:18.4px;height:18.4px;border-radius:50%;background:#b4707d"></div>
<div class="t" style="left:46.900000000000006px;top:338.02px;font-size:12.8px;-webkit-text-stroke:0.5px currentColor;color:#5a3a42">m</div>
<div class="t" style="left:66.30000000000001px;top:335.82px;font-size:17.5px;color:#cdcdcd;letter-spacing:0.32px">print()</div>
<div class="t" style="left:119.45px;top:335.82px;font-size:17.5px;color:#8f8f8f;letter-spacing:0.225px">(org.threeten.bp.format.DateTimeFormatterBuilder$CompositePrinterParser)</div>
<div class="t" style="right:559.60px;top:335.82px;font-size:17.5px;color:#cdcdcd;letter-spacing:0.28px;margin-right:-0.28px">706 303</div>
<div class="t" style="right:470.60px;top:335.82px;font-size:17.5px;color:#cdcdcd;letter-spacing:0.28px;margin-right:-0.28px">20,83</div>
<div class="t" style="right:331.70px;top:335.82px;font-size:17.5px;color:#cdcdcd;letter-spacing:0.28px;margin-right:-0.28px">1 281</div>
<div class="t" style="right:242.70px;top:335.82px;font-size:17.5px;color:#cdcdcd;letter-spacing:0.28px;margin-right:-0.28px">0,04</div>
<div class="t" style="right:103.00px;top:335.82px;font-size:17.5px;color:#cdcdcd;letter-spacing:0.28px;margin-right:-0.28px">705 022</div>
<div class="t" style="right:14.20px;top:335.82px;font-size:17.5px;color:#cdcdcd;letter-spacing:0.28px;margin-right:-0.28px">20,79</div>
<div class="a" style="left:1174.2px;top:357.58px;width:13.80px;height:23.2px;background:#45566a"></div>
<svg class="a" style="left:17.799999999999997px;top:363.78px" width="11" height="12" viewBox="0 0 11 12"><path d="M0,0.2 L10.8,5.9 L0,11.8 Z" fill="#b2b2b2"/></svg>
<div class="a" style="left:42.7px;top:359.88px;width:18.4px;height:18.4px;border-radius:50%;background:#b4707d"></div>
<div class="t" style="left:46.900000000000006px;top:363.78px;font-size:12.8px;-webkit-text-stroke:0.5px currentColor;color:#5a3a42">m</div>
<div class="t" style="left:66.30000000000001px;top:361.58px;font-size:17.5px;color:#cdcdcd;letter-spacing:0.32px">print()</div>
<div class="t" style="left:119.45px;top:361.58px;font-size:17.5px;color:#8f8f8f;letter-spacing:0.230px">(org.threeten.bp.format.DateTimeFormatterBuilder$NumberPrinterParser)</div>
<div class="t" style="right:559.60px;top:361.58px;font-size:17.5px;color:#cdcdcd;letter-spacing:0.28px;margin-right:-0.28px">705 022</div>
<div class="t" style="right:470.60px;top:361.58px;font-size:17.5px;color:#cdcdcd;letter-spacing:0.28px;margin-right:-0.28px">20,79</div>
<div class="t" style="right:331.70px;top:361.58px;font-size:17.5px;color:#cdcdcd;letter-spacing:0.28px;margin-right:-0.28px">2 333</div>
<div class="t" style="right:242.70px;top:361.58px;font-size:17.5px;color:#cdcdcd;letter-spacing:0.28px;margin-right:-0.28px">0,07</div>
<div class="t" style="right:103.00px;top:361.58px;font-size:17.5px;color:#cdcdcd;letter-spacing:0.28px;margin-right:-0.28px">702 689</div>
<div class="t" style="right:14.20px;top:361.58px;font-size:17.5px;color:#cdcdcd;letter-spacing:0.28px;margin-right:-0.28px">20,72</div>
<div class="a" style="left:1174.2px;top:383.34px;width:9.71px;height:23.2px;background:#45566a"></div>
<svg class="a" style="left:17.799999999999997px;top:389.54px" width="11" height="12" viewBox="0 0 11 12"><path d="M0,0.2 L10.8,5.9 L0,11.8 Z" fill="#b2b2b2"/></svg>
<div class="a" style="left:42.7px;top:385.64px;width:18.4px;height:18.4px;border-radius:50%;background:#b4707d"></div>
<div class="t" style="left:46.900000000000006px;top:389.54px;font-size:12.8px;-webkit-text-stroke:0.5px currentColor;color:#5a3a42">m</div>
<div class="t" style="left:66.30000000000001px;top:387.34px;font-size:17.5px;color:#cdcdcd;letter-spacing:0.32px">append()</div>
<div class="t" style="left:144.12px;top:387.34px;font-size:17.5px;color:#8f8f8f;letter-spacing:0.108px">(java.lang.StringBuilder)</div>
<div class="t" style="right:559.60px;top:387.34px;font-size:17.5px;color:#cdcdcd;letter-spacing:0.28px;margin-right:-0.28px">495 775</div>
<div class="t" style="right:470.60px;top:387.34px;font-size:17.5px;color:#cdcdcd;letter-spacing:0.28px;margin-right:-0.28px">14,62</div>
<div class="t" style="right:331.70px;top:387.34px;font-size:17.5px;color:#cdcdcd;letter-spacing:0.28px;margin-right:-0.28px">381 150</div>
<div class="t" style="right:242.70px;top:387.34px;font-size:17.5px;color:#cdcdcd;letter-spacing:0.28px;margin-right:-0.28px">11,24</div>
<div class="t" style="right:103.00px;top:387.34px;font-size:17.5px;color:#cdcdcd;letter-spacing:0.28px;margin-right:-0.28px">114 625</div>
<div class="t" style="right:14.20px;top:387.34px;font-size:17.5px;color:#cdcdcd;letter-spacing:0.28px;margin-right:-0.28px">3,38</div>
<div class="a" style="left:1174.2px;top:409.10px;width:8.52px;height:23.2px;background:#45566a"></div>
<svg class="a" style="left:17.799999999999997px;top:415.30px" width="11" height="12" viewBox="0 0 11 12"><path d="M0,0.2 L10.8,5.9 L0,11.8 Z" fill="#b2b2b2"/></svg>
<div class="a" style="left:42.7px;top:411.40px;width:18.4px;height:18.4px;border-radius:50%;background:#b4707d"></div>
<div class="t" style="left:46.900000000000006px;top:415.30px;font-size:12.8px;-webkit-text-stroke:0.5px currentColor;color:#5a3a42">m</div>
<div class="t" style="left:66.30000000000001px;top:413.10px;font-size:17.5px;color:#cdcdcd;letter-spacing:0.32px">ofSeconds()</div>
<div class="t" style="left:169.38px;top:413.10px;font-size:17.5px;color:#8f8f8f;letter-spacing:0.360px">(org.threeten.bp.Duration)</div>
<div class="t" style="right:559.60px;top:413.10px;font-size:17.5px;color:#cdcdcd;letter-spacing:0.28px;margin-right:-0.28px">434 958</div>
<div class="t" style="right:470.60px;top:413.10px;font-size:17.5px;color:#cdcdcd;letter-spacing:0.28px;margin-right:-0.28px">12,83</div>
<div class="t" style="right:331.70px;top:413.10px;font-size:17.5px;color:#cdcdcd;letter-spacing:0.28px;margin-right:-0.28px">2 375</div>
<div class="t" style="right:242.70px;top:413.10px;font-size:17.5px;color:#cdcdcd;letter-spacing:0.28px;margin-right:-0.28px">0,07</div>
<div class="t" style="right:103.00px;top:413.10px;font-size:17.5px;color:#cdcdcd;letter-spacing:0.28px;margin-right:-0.28px">432 583</div>
<div class="t" style="right:14.20px;top:413.10px;font-size:17.5px;color:#cdcdcd;letter-spacing:0.28px;margin-right:-0.28px">12,76</div>
<div class="a" style="left:1174.2px;top:434.86px;width:8.42px;height:23.2px;background:#45566a"></div>
<svg class="a" style="left:17.799999999999997px;top:441.06px" width="11" height="12" viewBox="0 0 11 12"><path d="M0,0.2 L10.8,5.9 L0,11.8 Z" fill="#b2b2b2"/></svg>
<div class="a" style="left:42.7px;top:437.16px;width:18.4px;height:18.4px;border-radius:50%;background:#b4707d"></div>
<div class="t" style="left:46.900000000000006px;top:441.06px;font-size:12.8px;-webkit-text-stroke:0.5px currentColor;color:#5a3a42">m</div>
<div class="t" style="left:66.30000000000001px;top:438.86px;font-size:17.5px;color:#cdcdcd;letter-spacing:0.32px">create()</div>
<div class="t" style="left:134.36px;top:438.86px;font-size:17.5px;color:#8f8f8f;letter-spacing:0.333px">(org.threeten.bp.Duration)</div>
<div class="t" style="right:559.60px;top:438.86px;font-size:17.5px;color:#cdcdcd;letter-spacing:0.28px;margin-right:-0.28px">429 810</div>
<div class="t" style="right:470.60px;top:438.86px;font-size:17.5px;color:#cdcdcd;letter-spacing:0.28px;margin-right:-0.28px">12,68</div>
<div class="t" style="right:331.70px;top:438.86px;font-size:17.5px;color:#cdcdcd;letter-spacing:0.28px;margin-right:-0.28px">3 736</div>
<div class="t" style="right:242.70px;top:438.86px;font-size:17.5px;color:#cdcdcd;letter-spacing:0.28px;margin-right:-0.28px">0,11</div>
<div class="t" style="right:103.00px;top:438.86px;font-size:17.5px;color:#cdcdcd;letter-spacing:0.28px;margin-right:-0.28px">426 074</div>
<div class="t" style="right:14.20px;top:438.86px;font-size:17.5px;color:#cdcdcd;letter-spacing:0.28px;margin-right:-0.28px">12,57</div>
<div class="a" style="left:1174.2px;top:460.62px;width:8.35px;height:23.2px;background:#45566a"></div>
<svg class="a" style="left:17.799999999999997px;top:466.82px" width="11" height="12" viewBox="0 0 11 12"><path d="M0,0.2 L10.8,5.9 L0,11.8 Z" fill="#b2b2b2"/></svg>
<div class="a" style="left:42.7px;top:462.92px;width:18.4px;height:18.4px;border-radius:50%;background:#b4707d"></div>
<div class="t" style="left:46.900000000000006px;top:466.82px;font-size:12.8px;-webkit-text-stroke:0.5px currentColor;color:#5a3a42">m</div>
<div class="t" style="left:66.30000000000001px;top:464.62px;font-size:17.5px;color:#cdcdcd;letter-spacing:0.32px">&lt;init&gt;()</div>
<div class="t" style="left:128.53px;top:464.62px;font-size:17.5px;color:#8f8f8f;letter-spacing:0.404px">(org.threeten.bp.Duration)</div>
<div class="t" style="right:559.60px;top:464.62px;font-size:17.5px;color:#cdcdcd;letter-spacing:0.28px;margin-right:-0.28px">426 074</div>
<div class="t" style="right:470.60px;top:464.62px;font-size:17.5px;color:#cdcdcd;letter-spacing:0.28px;margin-right:-0.28px">12,57</div>
<div class="t" style="right:331.70px;top:464.62px;font-size:17.5px;color:#cdcdcd;letter-spacing:0.28px;margin-right:-0.28px">426 074</div>
<div class="t" style="right:242.70px;top:464.62px;font-size:17.5px;color:#cdcdcd;letter-spacing:0.28px;margin-right:-0.28px">12,57</div>
<div class="t" style="right:103.00px;top:464.62px;font-size:17.5px;color:#cdcdcd;letter-spacing:0.28px;margin-right:-0.28px">0</div>
<div class="t" style="right:14.20px;top:464.62px;font-size:17.5px;color:#cdcdcd;letter-spacing:0.28px;margin-right:-0.28px">0,00</div>
<div class="a" style="left:1174.2px;top:486.38px;width:7.96px;height:23.2px;background:#45566a"></div>
<svg class="a" style="left:17.799999999999997px;top:492.58px" width="11" height="12" viewBox="0 0 11 12"><path d="M0,0.2 L10.8,5.9 L0,11.8 Z" fill="#b2b2b2"/></svg>
<div class="a" style="left:42.7px;top:488.68px;width:18.4px;height:18.4px;border-radius:50%;background:#b4707d"></div>
<div class="t" style="left:46.900000000000006px;top:492.58px;font-size:12.8px;-webkit-text-stroke:0.5px currentColor;color:#5a3a42">m</div>
<div class="t" style="left:66.30000000000001px;top:490.38px;font-size:17.5px;color:#cdcdcd;letter-spacing:0.32px">&lt;init&gt;()</div>
<div class="t" style="left:128.53px;top:490.38px;font-size:17.5px;color:#8f8f8f;letter-spacing:0.176px">(java.lang.StringBuilder)</div>
<div class="t" style="right:559.60px;top:490.38px;font-size:17.5px;color:#cdcdcd;letter-spacing:0.28px;margin-right:-0.28px">406 468</div>
<div class="t" style="right:470.60px;top:490.38px;font-size:17.5px;color:#cdcdcd;letter-spacing:0.28px;margin-right:-0.28px">11,99</div>
<div class="t" style="right:331.70px;top:490.38px;font-size:17.5px;color:#cdcdcd;letter-spacing:0.28px;margin-right:-0.28px">403 980</div>
<div class="t" style="right:242.70px;top:490.38px;font-size:17.5px;color:#cdcdcd;letter-spacing:0.28px;margin-right:-0.28px">11,91</div>
<div class="t" style="right:103.00px;top:490.38px;font-size:17.5px;color:#cdcdcd;letter-spacing:0.28px;margin-right:-0.28px">2 488</div>
<div class="t" style="right:14.20px;top:490.38px;font-size:17.5px;color:#cdcdcd;letter-spacing:0.28px;margin-right:-0.28px">0,07</div>
<div class="a" style="left:1174.2px;top:512.14px;width:7.80px;height:23.2px;background:#45566a"></div>
<svg class="a" style="left:17.799999999999997px;top:518.34px" width="11" height="12" viewBox="0 0 11 12"><path d="M0,0.2 L10.8,5.9 L0,11.8 Z" fill="#b2b2b2"/></svg>
<div class="a" style="left:42.7px;top:514.44px;width:18.4px;height:18.4px;border-radius:50%;background:#b4707d"></div>
<div class="t" style="left:46.900000000000006px;top:518.34px;font-size:12.8px;-webkit-text-stroke:0.5px currentColor;color:#5a3a42">m</div>
<div class="t" style="left:66.30000000000001px;top:516.14px;font-size:17.5px;color:#cdcdcd;letter-spacing:0.32px">toString()</div>
<div class="t" style="left:146.67px;top:516.14px;font-size:17.5px;color:#8f8f8f;letter-spacing:0.227px">(java.lang.Long)</div>
<div class="t" style="right:559.60px;top:516.14px;font-size:17.5px;color:#cdcdcd;letter-spacing:0.28px;margin-right:-0.28px">398 375</div>
<div class="t" style="right:470.60px;top:516.14px;font-size:17.5px;color:#cdcdcd;letter-spacing:0.28px;margin-right:-0.28px">11,75</div>
<div class="t" style="right:331.70px;top:516.14px;font-size:17.5px;color:#cdcdcd;letter-spacing:0.28px;margin-right:-0.28px">0</div>
<div class="t" style="right:242.70px;top:516.14px;font-size:17.5px;color:#cdcdcd;letter-spacing:0.28px;margin-right:-0.28px">0,00</div>
<div class="t" style="right:103.00px;top:516.14px;font-size:17.5px;color:#cdcdcd;letter-spacing:0.28px;margin-right:-0.28px">398 375</div>
<div class="t" style="right:14.20px;top:516.14px;font-size:17.5px;color:#cdcdcd;letter-spacing:0.28px;margin-right:-0.28px">11,75</div>
<div class="a" style="left:1174.2px;top:537.90px;width:7.08px;height:23.2px;background:#45566a"></div>
<svg class="a" style="left:17.799999999999997px;top:544.10px" width="11" height="12" viewBox="0 0 11 12"><path d="M0,0.2 L10.8,5.9 L0,11.8 Z" fill="#b2b2b2"/></svg>
<div class="a" style="left:42.7px;top:540.20px;width:18.4px;height:18.4px;border-radius:50%;background:#b4707d"></div>
<div class="t" style="left:46.900000000000006px;top:544.10px;font-size:12.8px;-webkit-text-stroke:0.5px currentColor;color:#5a3a42">m</div>
<div class="t" style="left:66.30000000000001px;top:541.90px;font-size:17.5px;color:#cdcdcd;letter-spacing:0.32px">plus()</div>
<div class="t" style="left:117.19px;top:541.90px;font-size:17.5px;color:#8f8f8f;letter-spacing:0.398px">(org.threeten.bp.Duration)</div>
<div class="t" style="right:559.60px;top:541.90px;font-size:17.5px;color:#cdcdcd;letter-spacing:0.28px;margin-right:-0.28px">361 457</div>
<div class="t" style="right:470.60px;top:541.90px;font-size:17.5px;color:#cdcdcd;letter-spacing:0.28px;margin-right:-0.28px">10,66</div>
<div class="t" style="right:331.70px;top:541.90px;font-size:17.5px;color:#cdcdcd;letter-spacing:0.28px;margin-right:-0.28px">2 711</div>
<div class="t" style="right:242.70px;top:541.90px;font-size:17.5px;color:#cdcdcd;letter-spacing:0.28px;margin-right:-0.28px">0,08</div>
<div class="t" style="right:103.00px;top:541.90px;font-size:17.5px;color:#cdcdcd;letter-spacing:0.28px;margin-right:-0.28px">358 746</div>
<div class="t" style="right:14.20px;top:541.90px;font-size:17.5px;color:#cdcdcd;letter-spacing:0.28px;margin-right:-0.28px">10,58</div>
<div class="a" style="left:1174.2px;top:563.66px;width:4.91px;height:23.2px;background:#45566a"></div>
<svg class="a" style="left:17.799999999999997px;top:569.86px" width="11" height="12" viewBox="0 0 11 12"><path d="M0,0.2 L10.8,5.9 L0,11.8 Z" fill="#b2b2b2"/></svg>
<div class="a" style="left:42.7px;top:565.96px;width:18.4px;height:18.4px;border-radius:50%;background:#b4707d"></div>
<div class="t" style="left:46.900000000000006px;top:569.86px;font-size:12.8px;-webkit-text-stroke:0.5px currentColor;color:#5a3a42">m</div>
<div class="t" style="left:66.30000000000001px;top:567.66px;font-size:17.5px;color:#cdcdcd;letter-spacing:0.32px">append()</div>
<div class="t" style="left:144.12px;top:567.66px;font-size:17.5px;color:#8f8f8f;letter-spacing:0.108px">(java.lang.StringBuilder)</div>
<div class="t" style="right:559.60px;top:567.66px;font-size:17.5px;color:#cdcdcd;letter-spacing:0.28px;margin-right:-0.28px">250 743</div>
<div class="t" style="right:470.60px;top:567.66px;font-size:17.5px;color:#cdcdcd;letter-spacing:0.28px;margin-right:-0.28px">7,40</div>
<div class="t" style="right:331.70px;top:567.66px;font-size:17.5px;color:#cdcdcd;letter-spacing:0.28px;margin-right:-0.28px">247 199</div>
<div class="t" style="right:242.70px;top:567.66px;font-size:17.5px;color:#cdcdcd;letter-spacing:0.28px;margin-right:-0.28px">7,29</div>
<div class="t" style="right:103.00px;top:567.66px;font-size:17.5px;color:#cdcdcd;letter-spacing:0.28px;margin-right:-0.28px">3 544</div>
<div class="t" style="right:14.20px;top:567.66px;font-size:17.5px;color:#cdcdcd;letter-spacing:0.28px;margin-right:-0.28px">0,10</div>
</div>
<div class="a" style="left:72px;top:566.8px;width:1856px;height:1.8px;background:#2b2d2f"></div>
<div class="a" style="left:72px;top:568.6px;width:1856px;height:24.4px;background:linear-gradient(#4f5356,#393b3e)"></div>
<div class="a" style="left:72px;top:593px;width:1856px;height:1.3px;background:#2e3032"></div>
<div class="a" style="left:1241.7px;top:568.6px;width:1px;height:24.4px;background:#2b2d2f"></div>
<div class="a" style="left:1242.7px;top:568.6px;width:1px;height:24.4px;background:#56595c"></div>
<div class="a" style="left:1380.9px;top:568.6px;width:1px;height:24.4px;background:#2b2d2f"></div>
<div class="a" style="left:1381.9px;top:568.6px;width:1px;height:24.4px;background:#56595c"></div>
<div class="a" style="left:1469.9px;top:568.6px;width:1px;height:24.4px;background:#2b2d2f"></div>
<div class="a" style="left:1470.9px;top:568.6px;width:1px;height:24.4px;background:#56595c"></div>
<div class="a" style="left:1608.9px;top:568.6px;width:1px;height:24.4px;background:#2b2d2f"></div>
<div class="a" style="left:1609.9px;top:568.6px;width:1px;height:24.4px;background:#56595c"></div>
<div class="a" style="left:1698.1000000000001px;top:568.6px;width:1px;height:24.4px;background:#2b2d2f"></div>
<div class="a" style="left:1699.1000000000001px;top:568.6px;width:1px;height:24.4px;background:#56595c"></div>
<div class="a" style="left:1837.2px;top:568.6px;width:1px;height:24.4px;background:#2b2d2f"></div>
<div class="a" style="left:1838.2px;top:568.6px;width:1px;height:24.4px;background:#56595c"></div>
<div class="a" style="left:1925.4px;top:568.6px;width:1px;height:24.4px;background:#2b2d2f"></div>
<div class="a" style="left:1926.4px;top:568.6px;width:1px;height:24.4px;background:#56595c"></div>
<div class="t" style="left:85.75px;top:575px;font-size:14.7px;color:#cacaca;letter-spacing:0.3px">Name</div>
<div class="t" style="right:630.3999999999999px;top:575px;font-size:14.7px;color:#cacaca;text-align:right;letter-spacing:0.3px;margin-right:-0.3px">Total (μs)</div>
<div class="t" style="right:541.3999999999999px;top:575px;font-size:14.7px;color:#cacaca;text-align:right;letter-spacing:0.3px;margin-right:-0.3px">%</div>
<div class="t" style="right:402.5px;top:575px;font-size:14.7px;color:#cacaca;text-align:right;letter-spacing:0.3px;margin-right:-0.3px">Self (μs)</div>
<div class="t" style="right:313.5px;top:575px;font-size:14.7px;color:#cacaca;text-align:right;letter-spacing:0.3px;margin-right:-0.3px">%</div>
<div class="t" style="right:173.79999999999995px;top:575px;font-size:14.7px;color:#cacaca;text-align:right;letter-spacing:0.3px;margin-right:-0.3px">Children (μs)</div>
<div class="t" style="right:85.0px;top:575px;font-size:14.7px;color:#cacaca;text-align:right;letter-spacing:0.3px;margin-right:-0.3px">%</div></body></html>
